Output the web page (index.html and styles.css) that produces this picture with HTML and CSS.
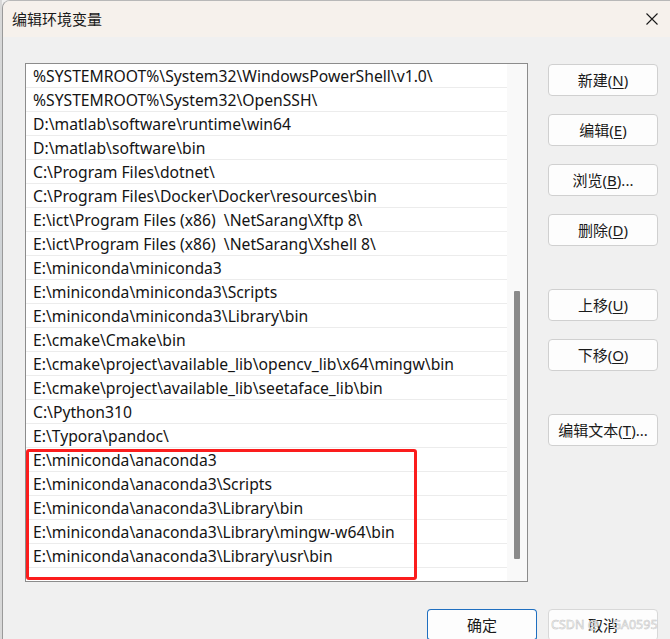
FILE: index.html
```html
<!DOCTYPE html>
<html lang="zh-CN">
<head>
<meta charset="utf-8">
<title>编辑环境变量</title>
<link rel="stylesheet" href="styles.css">
</head>
<body>
<div class="frame">
  <div class="edge"></div>
  <div class="window">
    <div class="titlebar">
      <span class="title">编辑环境变量</span>
      <svg class="close" width="14" height="14" viewBox="0 0 14 14"><path d="M1.5 1.5 L12.5 12.5 M12.5 1.5 L1.5 12.5" stroke="#1a1a1a" stroke-width="1.1" fill="none"/></svg>
    </div>
    <div class="content">
      <div class="main">
        <div class="list">
          <div class="rows">
            <div class="row">%SYSTEMROOT%\System32\WindowsPowerShell\v1.0\</div>
            <div class="row">%SYSTEMROOT%\System32\OpenSSH\</div>
            <div class="row">D:\matlab\software\runtime\win64</div>
            <div class="row">D:\matlab\software\bin</div>
            <div class="row">C:\Program Files\dotnet\</div>
            <div class="row">C:\Program Files\Docker\Docker\resources\bin</div>
            <div class="row">E:\ict\Program Files (x86)&nbsp;&nbsp;\NetSarang\Xftp 8\</div>
            <div class="row">E:\ict\Program Files (x86)&nbsp;&nbsp;\NetSarang\Xshell 8\</div>
            <div class="row">E:\miniconda\miniconda3</div>
            <div class="row">E:\miniconda\miniconda3\Scripts</div>
            <div class="row">E:\miniconda\miniconda3\Library\bin</div>
            <div class="row">E:\cmake\Cmake\bin</div>
            <div class="row">E:\cmake\project\available_lib\opencv_lib\x64\mingw\bin</div>
            <div class="row">E:\cmake\project\available_lib\seetaface_lib\bin</div>
            <div class="row">C:\Python310</div>
            <div class="row">E:\Typora\pandoc\</div>
            <div class="row">E:\miniconda\anaconda3</div>
            <div class="row">E:\miniconda\anaconda3\Scripts</div>
            <div class="row">E:\miniconda\anaconda3\Library\bin</div>
            <div class="row">E:\miniconda\anaconda3\Library\mingw-w64\bin</div>
            <div class="row">E:\miniconda\anaconda3\Library\usr\bin</div>
            <div class="row"></div>
            <div class="highlight"></div>
          </div>
          <div class="scrollbar"><div class="thumb"></div></div>
        </div>
        <div class="side">
          <button class="btn">新建(<u>N</u>)</button>
          <button class="btn">编辑(<u>E</u>)</button>
          <button class="btn">浏览(<u>B</u>)...</button>
          <button class="btn">删除(<u>D</u>)</button>
          <button class="btn gap">上移(<u>U</u>)</button>
          <button class="btn">下移(<u>O</u>)</button>
          <button class="btn gap">编辑文本(<u>T</u>)...</button>
        </div>
      </div>
      <div class="footer">
        <button class="btn default">确定</button>
        <button class="btn cancel">取消<span class="watermark">CSDN @&nbsp;&nbsp;&nbsp;&nbsp;GA0595</span></button>
      </div>
    </div>
  </div>
</div>
</body>
</html>
```

FILE: styles.css
```css
* { box-sizing: border-box; }
html, body {
  margin: 0;
  padding: 0;
  width: 670px;
  height: 639px;
  overflow: hidden;
  background: #f0f0f0;
  font-family: "Noto Sans", "Noto Sans CJK SC", sans-serif;
  color: #1a1a1a;
}
.frame {
  display: flex;
  height: 639px;
}
.edge {
  width: 2px;
  background: linear-gradient(#d8d8d8, #cfd3d6 40%, #d8d8d8);
}
.window {
  flex: 1;
  display: flex;
  flex-direction: column;
  border-left: 1px solid #9a9a9a;
  border-top: 1px solid #b8b8b8;
  border-top-left-radius: 8px;
  background: #f0f0f0;
  overflow: hidden;
}
.titlebar {
  height: 36px;
  flex: none;
  background: #f6f1ec;
  display: flex;
  align-items: center;
  justify-content: space-between;
  padding: 0 11px 0 9px;
}
.title {
  font-family: "Noto Sans CJK SC", sans-serif;
  font-size: 15px;
  color: #1a1a1a;
  margin-top: -1px;
}
.close { display: block; }
.content {
  padding: 26px 0 0 22px;
  display: flex;
  flex-direction: column;
}
.main {
  display: flex;
  gap: 20px;
}
.list {
  position: relative;
  width: 503px;
  height: 519px;
  border: 1px solid #8c8c8c;
  background: #ffffff;
  display: flex;
  overflow: hidden;
}
.rows {
  position: relative;
  width: 481px;
  flex: none;
}
.row {
  height: 24px;
  border-bottom: 1px solid #ececec;
  padding: 1px 0 0 7px;
  font-size: 15.7px;
  line-height: 23px;
  white-space: nowrap;
  color: #141414;
}
.highlight {
  position: absolute;
  left: 0;
  top: 385px;
  width: 391px;
  height: 131px;
  border: 3px solid #fb1d1d;
  border-radius: 3px;
}
.scrollbar {
  flex: 1;
  background: #f9f9f9;
  display: flex;
  flex-direction: column;
  align-items: center;
}
.thumb {
  margin-top: 227px;
  width: 6px;
  height: 268px;
  background: #8a8a8a;
  border-radius: 1px;
}
.side {
  display: flex;
  flex-direction: column;
  gap: 18px;
  padding-top: 1px;
}
.btn {
  width: 110px;
  height: 32px;
  border: 1px solid #d0d0d0;
  border-radius: 4px;
  background: #fdfdfd;
  font-family: "Noto Sans", "Noto Sans CJK SC", sans-serif;
  font-size: 15px;
  color: #1a1a1a;
  padding: 0;
  line-height: 30px;
}
.btn u { text-underline-offset: 2px; }
.btn.gap { margin-top: 25px; }
.footer {
  display: flex;
  gap: 11px;
  padding-left: 402px;
  margin-top: 27px;
}
.btn.default {
  border: 1px solid #1f6fc0;
  border-bottom-width: 2px;
}
.btn.cancel {
  position: relative;
  border-color: #d8d8d8;
}
.watermark {
  position: absolute;
  left: 2px;
  top: 7px;
  font-size: 12.5px;
  line-height: 16px;
  color: #fafafa;
  white-space: nowrap;
  -webkit-text-stroke: 0.5px #c2c2c2;
}
```
